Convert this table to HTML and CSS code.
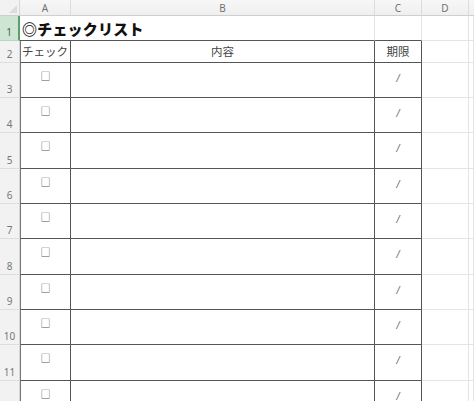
FILE: index.html
```html
<!DOCTYPE html>
<html lang="ja">
<head>
<meta charset="utf-8">
<link rel="stylesheet" href="styles.css">
</head>
<body>
<div class="sheet">
  <div class="corner"><span class="tri"></span></div>
  <div class="ch">A</div><div class="ch">B</div><div class="ch">C</div><div class="ch">D</div><div class="ch ch-last"></div>

  <div class="rh rh-sel">1</div>
  <div class="c title-cell"><span class="title">◎チェックリスト</span></div>
  <div class="c t-top"></div>
  <div class="c t-top"></div>
  <div class="c"></div><div class="c"></div>

  <div class="rh">2</div>
  <div class="c t-a t-head">チェック</div>
  <div class="c t-b t-head">内容</div>
  <div class="c t-c t-head">期限</div>
  <div class="c"></div><div class="c"></div>

  <div class="rh">3</div><div class="c t-a box">□</div><div class="c t-b"></div><div class="c t-c slash">/</div><div class="c"></div><div class="c"></div>
  <div class="rh">4</div><div class="c t-a box">□</div><div class="c t-b"></div><div class="c t-c slash">/</div><div class="c"></div><div class="c"></div>
  <div class="rh">5</div><div class="c t-a box">□</div><div class="c t-b"></div><div class="c t-c slash">/</div><div class="c"></div><div class="c"></div>
  <div class="rh">6</div><div class="c t-a box">□</div><div class="c t-b"></div><div class="c t-c slash">/</div><div class="c"></div><div class="c"></div>
  <div class="rh">7</div><div class="c t-a box">□</div><div class="c t-b"></div><div class="c t-c slash">/</div><div class="c"></div><div class="c"></div>
  <div class="rh">8</div><div class="c t-a box">□</div><div class="c t-b"></div><div class="c t-c slash">/</div><div class="c"></div><div class="c"></div>
  <div class="rh">9</div><div class="c t-a box">□</div><div class="c t-b"></div><div class="c t-c slash">/</div><div class="c"></div><div class="c"></div>
  <div class="rh">10</div><div class="c t-a box">□</div><div class="c t-b"></div><div class="c t-c slash">/</div><div class="c"></div><div class="c"></div>
  <div class="rh">11</div><div class="c t-a box">□</div><div class="c t-b"></div><div class="c t-c slash">/</div><div class="c"></div><div class="c"></div>
  <div class="rh"></div><div class="c t-a box">□</div><div class="c t-b"></div><div class="c t-c slash">/</div><div class="c"></div><div class="c"></div>
</div>
</body>
</html>
```

FILE: styles.css
```css
html, body {
  margin: 0;
  padding: 0;
  background: #ffffff;
  overflow: hidden;
}

.sheet {
  display: grid;
  grid-template-columns: 20px 51px 304px 47px 47px 5px;
  grid-template-rows: 16px 25px 22px 35px 35px 36px 35px 35px 36px 35px 35px 36px 35px;
  width: 474px;
  height: 401px;
  overflow: hidden;
  font-family: "Noto Sans CJK JP", "Noto Sans", sans-serif;
}

.sheet > div {
  box-sizing: border-box;
}

.corner {
  background: #f2f2f2;
  border-right: 1px solid #d6d6d6;
  border-bottom: 1px solid #cfcfcf;
  position: relative;
}

.tri {
  position: absolute;
  right: 2px;
  bottom: 2px;
  width: 0;
  height: 0;
  border-left: 8px solid transparent;
  border-bottom: 8px solid #dcdcdc;
}

.ch {
  background: linear-gradient(#f7f7f7, #efefef);
  border-right: 1px solid #dcdcdc;
  border-bottom: 1px solid #cfcfcf;
  color: #707070;
  font-family: "Noto Sans", "Liberation Sans", sans-serif;
  font-size: 10px;
  display: flex;
  align-items: center;
  justify-content: center;
  line-height: 1;
}

.ch-last {
  border-right: none;
}

.rh {
  background: #f2f2f2;
  border-right: 1px solid #d6d6d6;
  border-bottom: 1px solid #dedede;
  color: #777777;
  font-family: "Noto Sans", "Liberation Sans", sans-serif;
  font-size: 10px;
  display: flex;
  align-items: flex-end;
  justify-content: center;
  padding-bottom: 3px;
  line-height: 1;
}

.rh-sel {
  background: #cfe5d4;
  border-right: 2px solid #5c9e6e;
  border-bottom: 1px solid #b8d6bf;
  color: #2f6b3f;
}

.c {
  border-right: 1px solid #e4e4e4;
  border-bottom: 1px solid #e4e4e4;
}

.title-cell {
  border-right: none;
  border-bottom: 1px solid #555555;
  display: flex;
  align-items: center;
  white-space: nowrap;
  overflow: visible;
  padding-left: 2px;
}

.title {
  font-weight: 900;
  font-size: 15px;
  color: #111111;
  letter-spacing: 0.2px;
}

.t-top {
  border-bottom: 1px solid #555555;
}

.t-a, .t-b, .t-c {
  border-right: 1px solid #555555;
  border-bottom: 1px solid #555555;
}

.t-a {
  border-left: 1px solid #777777;
}

.t-head {
  display: flex;
  align-items: center;
  justify-content: center;
  font-size: 11.5px;
  color: #444444;
  line-height: 1;
  white-space: nowrap;
}

.t-a.t-head {
  justify-content: flex-start;
  padding-left: 1px;
  font-size: 11.5px;
  overflow: visible;
}

.box {
  display: flex;
  justify-content: center;
  align-items: flex-start;
  padding-top: 8px;
  font-size: 10px;
  color: #555555;
  line-height: 1;
}

.slash {
  display: flex;
  justify-content: center;
  align-items: flex-start;
  padding-top: 10px;
  font-family: "Liberation Sans", sans-serif;
  font-size: 11px;
  color: #666666;
  line-height: 1;
  font-style: italic;
}
```
